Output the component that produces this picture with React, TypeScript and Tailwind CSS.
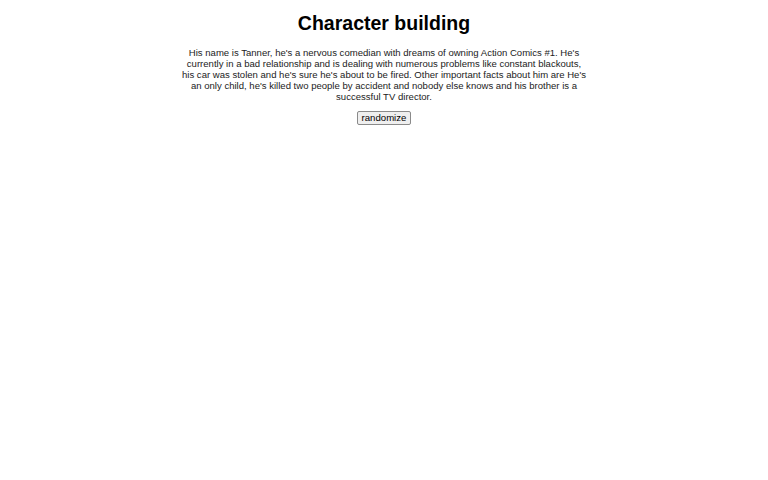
import React, { useState } from 'react';

const story =
  "His name is Tanner, he's a nervous comedian with dreams of owning Action Comics #1. He's currently in a bad relationship and is dealing with numerous problems like constant blackouts, his car was stolen and he's sure he's about to be fired. Other important facts about him are He's an only child, he's killed two people by accident and nobody else knows and his brother is a successful TV director.";

const App: React.FC = () => {
  const [text] = useState(story);

  return (
    <div className="min-h-screen bg-white text-black font-['Liberation_Sans',Arial,sans-serif]">
      <div className="mx-auto w-[408px] pt-[12px] text-center">
        <h1 className="text-[19.5px] font-bold leading-[22px]">Character building</h1>
        <p className="mt-[13px] text-[9.55px] leading-[11px] text-[#222]">{text}</p>
        <button className="mt-[9px] rounded-[2px] border border-[#8a8a8a] bg-[#efefef] px-[4px] text-[9.6px] leading-[12px]">
          randomize
        </button>
      </div>
    </div>
  );
};

export default App;
